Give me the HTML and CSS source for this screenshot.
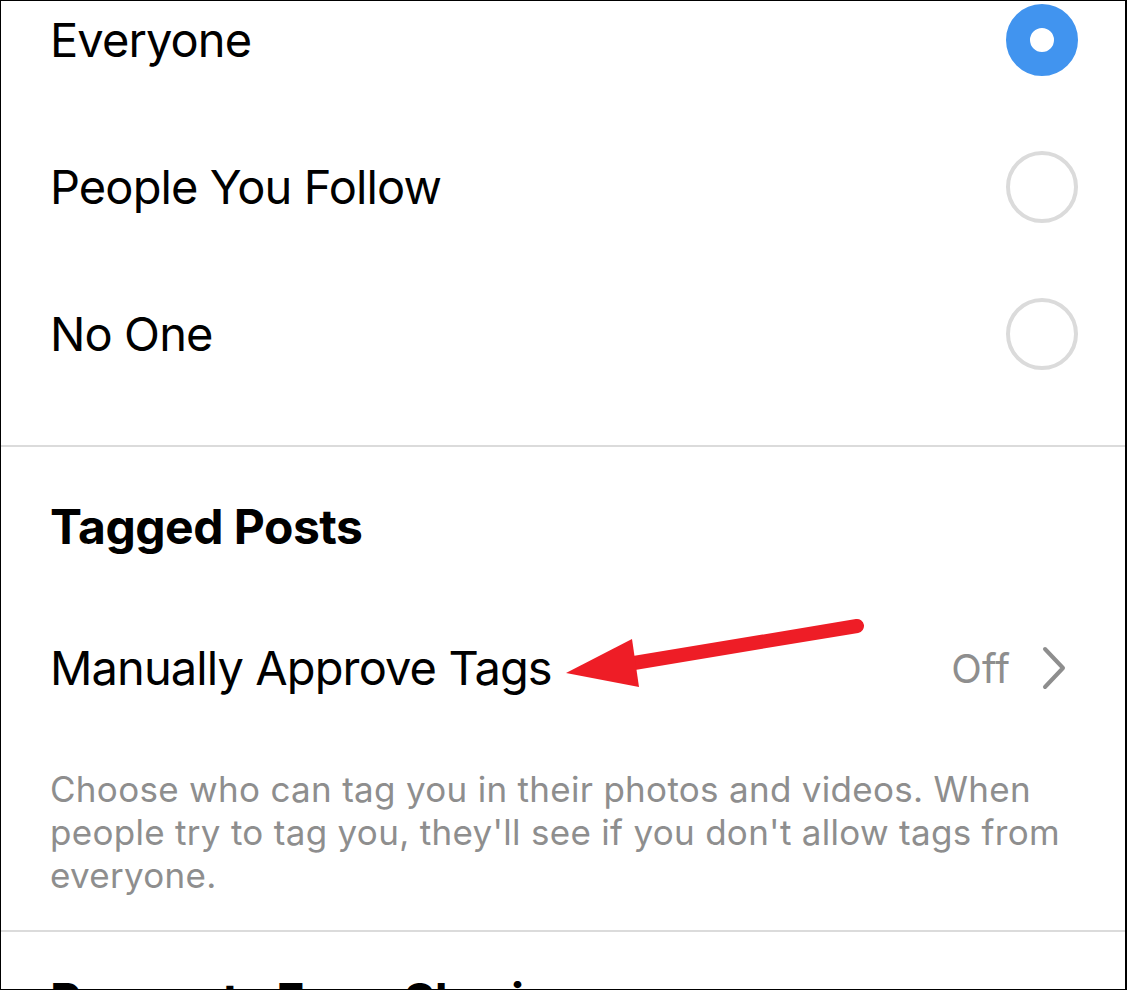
FILE: index.html
```html
<!DOCTYPE html>
<html lang="en">
<head>
    <meta charset="UTF-8">
    <meta name="viewport" content="width=device-width, initial-scale=1.0">
    <title>Tags and Mentions</title>
    <link rel="stylesheet" href="styles.css">
</head>
<body>
    <div class="screen">
        <div class="options">
            <div class="option">
                <span class="label">Everyone</span>
                <span class="radio checked"></span>
            </div>
            <div class="option">
                <span class="label">People You Follow</span>
                <span class="radio"></span>
            </div>
            <div class="option">
                <span class="label">No One</span>
                <span class="radio"></span>
            </div>
        </div>

        <div class="section">
            <h2>Tagged Posts</h2>
            <div class="row">
                <span class="label">Manually Approve Tags</span>
                <span class="value">
                    Off
                    <svg class="chevron" width="26" height="44" viewBox="0 0 26 44">
                        <path d="M4 3 L22 22 L4 41" fill="none" stroke="#8e8e8e" stroke-width="4" stroke-linecap="round" stroke-linejoin="round"/>
                    </svg>
                </span>
            </div>
            <p class="note">Choose who can tag you in their photos and videos. When people try to tag you, they'll see if you don't allow tags from everyone.</p>
        </div>

        <div class="section section-next">
            <h2>Requests From Sharing</h2>
        </div>

        <!-- annotation arrow drawn over the screenshot -->
        <svg class="arrow" width="1127" height="990" viewBox="0 0 1127 990">
            <line x1="628" y1="664" x2="857" y2="626" stroke="#ee1d26" stroke-width="14" stroke-linecap="round"/>
            <polygon points="566,673 632,639 639,687" fill="#ee1d26"/>
        </svg>
    </div>
</body>
</html>
```

FILE: styles.css
```css
body {
    margin: 0;
    background-color: #fff;
    font-family: 'Inter', 'Liberation Sans', sans-serif;
    color: #000;
}

.screen {
    position: relative;
    box-sizing: border-box;
    width: 1127px;
    height: 990px;
    border: 1px solid #000;
    border-right-width: 2px;
    overflow: hidden;
    background-color: #fff;
}

.options {
    margin-top: -35px;
    padding-bottom: 38px;
    border-bottom: 2px solid #dbdbdb;
}

.option,
.row {
    display: flex;
    align-items: center;
    justify-content: space-between;
    padding: 0 47px 0 49px;
}

.option {
    height: 147px;
}

.label {
    font-size: 47px;
    line-height: 60px;
    letter-spacing: -0.9px;
}

.radio {
    box-sizing: border-box;
    width: 72px;
    height: 72px;
    border-radius: 50%;
    border: 4px solid #dbdbdb;
}

.radio.checked {
    border: 24px solid #4194ef;
    background-color: #fff;
}

.section {
    padding: 50px 0 33px;
    border-bottom: 2px solid #dbdbdb;
}

.section h2 {
    margin: 0 0 50px;
    padding: 0 49px;
    font-size: 48px;
    line-height: 60px;
    font-weight: 700;
    letter-spacing: -0.5px;
}

.row {
    height: 122px;
    padding-right: 58px;
}

.value {
    display: flex;
    align-items: center;
    gap: 31px;
    font-size: 40px;
    color: #8e8e8e;
}

.note {
    margin: 39px 0 0;
    padding: 0 49px;
    font-size: 35px;
    line-height: 43px;
    letter-spacing: 0.3px;
    color: #8e8e8e;
}

.section-next {
    padding-top: 39px;
    border-bottom: none;
}

.arrow {
    position: absolute;
    top: -1px;
    left: -1px;
    pointer-events: none;
}
```
